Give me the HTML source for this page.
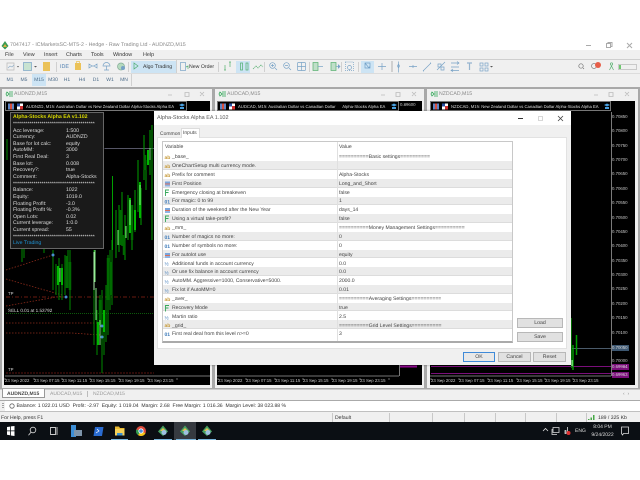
<!DOCTYPE html>
<html><head><meta charset="utf-8">
<style>
html,body{margin:0;padding:0;background:#fff}
#p{position:relative;width:640px;height:480px;overflow:hidden;background:#fff;font-family:"Liberation Sans",sans-serif;font-size:5px;color:#333;text-rendering:geometricPrecision;filter:blur(.3px)}
#p div,#p span{position:absolute;white-space:nowrap}
.t{line-height:8px;height:8px}
.win{background:#f0f0f0;border:1px solid #a8a8a8;box-sizing:border-box}
.blk{background:#000}
.wh{color:#ddd}
.tf{top:75px;height:11px;line-height:11px;text-align:center;color:#4a6a88;font-size:5px}
.ro{left:163px;width:349px;height:8.83px;box-sizing:border-box;border-bottom:1px solid #dcdcdc}
.lb{left:172px;line-height:8px;color:#444;font-size:5.100px}
.vl{left:339px;line-height:8px;color:#444;font-size:5.100px}
.btn{background:#e1e1e1;border:1px solid #b8b8b8;box-sizing:border-box;text-align:center;color:#444;font-size:5.200px;line-height:8.500px}
.ov{left:13px;color:#d8d8d8;font-size:5.200px;line-height:7px}
.ov2{left:66px;color:#d8d8d8;font-size:5.200px;line-height:7px}
.ax{color:#ccc;font-size:4.300px;line-height:6px}
</style></head><body><div id="p">

<!-- title -->
<div style="left:0;top:40px;width:640px;height:10px;background:#fff"></div>
<svg style="position:absolute;left:1px;top:41px" width="8" height="9"><path d="M4 0L7.500 5 4 8.500.5 5z" fill="#3a9a55"/><path d="M2 6l2-3 2 3z" fill="#e0b040"/></svg>
<div class="t" style="left:10px;top:41px;color:#8a8a8a;font-size:5.300px">7047417 - ICMarketsSC-MT5-2 - Hedge - Raw Trading Ltd - AUDNZD,M15</div>
<svg style="position:absolute;left:582px;top:41px" width="58" height="9" stroke="#aaa" fill="none"><path d="M4 4.500h5"/><path d="M24.500 2.500h4v4h-4z"/><path d="M26 2.500v-1h4v4h-1"/><path d="M45 2l5 5M50 2l-5 5"/></svg>

<!-- menu -->
<div style="left:0;top:50px;width:640px;height:10px;background:#f0f0f0"></div>
<div class="t" style="left:5px;top:51px;color:#333;font-size:5.400px">File</div>
<div class="t" style="left:23px;top:51px;color:#333;font-size:5.400px">View</div>
<div class="t" style="left:44px;top:51px;color:#333;font-size:5.400px">Insert</div>
<div class="t" style="left:66px;top:51px;color:#333;font-size:5.400px">Charts</div>
<div class="t" style="left:91px;top:51px;color:#333;font-size:5.400px">Tools</div>
<div class="t" style="left:113px;top:51px;color:#333;font-size:5.400px">Window</div>
<div class="t" style="left:143px;top:51px;color:#333;font-size:5.400px">Help</div>

<!-- toolbars -->
<div style="left:0;top:60px;width:640px;height:27px;background:#f0f0f0"></div>
<div style="left:0;top:59px;width:640px;height:1px;background:#cfcfcf"></div>
<div style="left:176px;top:60px;width:1px;height:14px;background:#d0d0d0"></div>
<div style="left:0;top:73px;width:640px;height:1px;background:#dcdcdc"></div>
<div style="left:131px;top:60.500px;width:45px;height:12px;background:#cde4f4"></div>
<div style="left:236px;top:60.500px;width:14px;height:12px;background:#cde4f4"></div>
<div style="left:361px;top:60.500px;width:13px;height:12px;background:#cde4f4"></div>
<div class="t" style="left:143px;top:63px;color:#333;font-size:5.200px">Algo Trading</div>
<div class="t" style="left:189px;top:63px;color:#333;font-size:5.200px">New Order</div>
<div class="t" style="left:60px;top:63px;color:#4f7fb0;font-size:5.400px">IDE</div>
<svg style="position:absolute;left:0;top:60px;opacity:.8" width="640" height="13" fill="none" stroke="#5a8fbc" stroke-width=".7">
<path d="M7 3h7v7H7z" stroke="#aaa"/><path d="M8 8l2-2 2 1 2-2" stroke="#7aa0c0"/><path d="M17 6h2l-1 1.500z" fill="#333" stroke="none"/>
<rect x="23.500" y="2.500" width="8" height="8" fill="#bfe0ca" stroke="#5a8fbc"/><path d="M34 6h3l-1.500 1.500z" fill="#333" stroke="none"/>
<rect x="43" y="2" width="7" height="9" fill="#eab733" stroke="none"/><rect x="75" y="3" width="6" height="7" fill="#eab733" stroke="none"/><path d="M76.500 3V1.500h3V3" stroke="#eab733"/>
<path d="M89 4l3 2-3 2zM97 4l-3 2 3 2z"/><path d="M92 6h2"/>
<path d="M103 6a3.500 3.500 0 017 0zM106.500 6v4M104 10h5"/>
<circle cx="121" cy="6.500" r="3.500" fill="#a7d5b2" stroke="#6a9a80"/><circle cx="123" cy="8" r="2" fill="#5a8fbc" stroke="none"/>
<path d="M134 3l4 3-4 3z" stroke="#2f9f4f"/>
<rect x="180.500" y="2.500" width="5" height="8" stroke="#5a8fbc"/><path d="M186 7l2-1v3" stroke="#2f9f4f"/>
<path d="M225 10V5M224 10h2M230 7V2M229 2h2" stroke="#2fa04f"/>
<path d="M240.500 3h2v7h-2zM246 3h2v7h-2z" stroke="#2f9f4f"/>
<path d="M253 9l3-3 2 2 3-3 2 2" stroke="#2f9f4f" stroke-dasharray="1.500 .5"/>
<circle cx="272.500" cy="5.500" r="2.800"/><path d="M275 8l2 2M271 5.500h3M272.500 4v3"/>
<circle cx="286.500" cy="5.500" r="2.800"/><path d="M289 8l2 2M285 5.500h3"/>
<rect x="297.500" y="2.500" width="8" height="8" rx="1"/><path d="M301.500 2.500v8M297.500 6.500h8"/>
<rect x="313" y="2.500" width="5" height="8" fill="#b5dcc0" stroke="#2f9f4f"/><path d="M318 6.500h5"/>
<rect x="331" y="2.500" width="5" height="8" fill="#b5dcc0" stroke="#2f9f4f"/><path d="M336 6.500h2"/><path d="M338 4.500l2 2-2 2" fill="#5a8fbc"/>
<rect x="345.500" y="2" width="8" height="8.500" stroke-dasharray="1 1"/><circle cx="349.500" cy="7.500" r="2"/>
<path d="M365 3v5h5v-5zM365 3l4 5 1-2"/>
<path d="M378 6.500h8M382 3v7"/>
<path d="M398.500 1.500v11M398.500 4l1 2-1 2-1-2z"/>
<path d="M409 6.500h8M413 5v3"/>
<path d="M423 11l8-8M423 11h1M430 3h1"/>
<path d="M437 10l8-8M438 4h3v3h-3zM441 7h3v3h-3z"/>
<path d="M451 3h8M451 7h8M451 10.500h8M457 1.500l2 1.500-2 1.500M453 9l-2 1.500 2 1"/>
<path d="M467 3h5M469.500 3v7" stroke="#7fa6c7" stroke-width="1.200"/>
<rect x="480" y="3" width="3" height="3"/><rect x="485" y="3" width="3" height="3"/><rect x="480" y="8" width="3" height="3"/><rect x="485" y="8" width="3" height="3"/><path d="M490 6h3l-1.500 1.500z" fill="#333" stroke="none"/>
<circle cx="581" cy="6" r="2.200" stroke="#555"/><path d="M583 8l1 1" stroke="#555"/>
<circle cx="594" cy="6" r="2.500" stroke="#666"/><circle cx="598" cy="5" r="3" fill="#e53a20" stroke="none"/>
<circle cx="611.500" cy="4" r="1.200" stroke="#2f9f4f"/><path d="M609.500 10l2-4 2 4" stroke="#2f9f4f"/>
<rect x="618.500" y="4.500" width="18" height="5" stroke="#aaa"/><rect x="619" y="5" width="2" height="4" fill="#4fc04f" stroke="none"/>
</svg>
<div style="left:56px;top:62px;width:1px;height:10px;background:#d0d0d0"></div>
<div style="left:128px;top:62px;width:1px;height:10px;background:#d0d0d0"></div>
<div style="left:218px;top:62px;width:1px;height:10px;background:#d0d0d0"></div>
<div style="left:264px;top:62px;width:1px;height:10px;background:#d0d0d0"></div>
<div style="left:309px;top:62px;width:1px;height:10px;background:#d0d0d0"></div>
<div style="left:341px;top:62px;width:1px;height:10px;background:#d0d0d0"></div>
<div style="left:358px;top:62px;width:1px;height:10px;background:#d0d0d0"></div>
<div style="left:391px;top:61px;width:2px;height:11px;background:#d0d0d0"></div>

<!-- timeframes -->
<div style="left:32px;top:74px;width:14px;height:12px;background:#cde4f4"></div>
<div style="left:131px;top:74px;width:1px;height:12px;background:#d0d0d0"></div>
<div class="tf" style="left:3px;width:14px">M1</div>
<div class="tf" style="left:17px;width:14px">M5</div>
<div class="tf" style="left:32px;width:14px">M15</div>
<div class="tf" style="left:46px;width:14px">M30</div>
<div class="tf" style="left:60px;width:14px">H1</div>
<div class="tf" style="left:75px;width:14px">H4</div>
<div class="tf" style="left:89px;width:14px">D1</div>
<div class="tf" style="left:103px;width:14px">W1</div>
<div class="tf" style="left:117px;width:14px">MN</div>

<!-- MDI -->
<div style="left:0;top:87px;width:640px;height:303px;background:#a9a9a9"></div>

<!-- windows -->
<div class="win" style="left:1px;top:87.500px;width:212px;height:301px"></div>
<div class="blk" style="left:4px;top:101px;width:206px;height:284px"></div>
<div class="t" style="left:14px;top:90px;color:#8a8a8a;font-size:5.200px">AUDNZD,M15</div>
<div class="win" style="left:214px;top:87.500px;width:211px;height:301px"></div>
<div class="blk" style="left:217px;top:101px;width:205px;height:284px"></div>
<div class="t" style="left:227px;top:90px;color:#8a8a8a;font-size:5.200px">AUDCAD,M15</div>
<div class="win" style="left:426px;top:87.500px;width:213px;height:301px"></div>
<div class="blk" style="left:430px;top:101px;width:205px;height:284px"></div>
<div class="t" style="left:439px;top:90px;color:#8a8a8a;font-size:5.200px">NZDCAD,M15</div>
<svg style="position:absolute;left:0;top:88px" width="640" height="13" fill="none" stroke-width=".8">
<path d="M7 4l2 2-2 2-1-2zM10 3v6M12 3v6" stroke="#35a85a"/><path d="M220 4l2 2-2 2-1-2zM223 3v6M225 3v6" stroke="#35a85a"/><path d="M432 4l2 2-2 2-1-2zM435 3v6M437 3v6" stroke="#35a85a"/>
<path d="M168 7h4M185 4.500h4v4h-4zM200 4l4 4M204 4l-4 4" stroke="#bbb"/>
<path d="M381 7h4M396 4.500h4v4h-4zM412 4l4 4M416 4l-4 4" stroke="#bbb"/>
<path d="M594 7h4M609 4.500h4v4h-4zM625 4l4 4M629 4l-4 4" stroke="#bbb"/>
</svg>

<!-- chart 1 -->
<svg style="position:absolute;left:5px;top:101px" width="205" height="284">
<g transform="translate(-5,-101)" fill="none">
<path d="M104.500 148.500H154" stroke="#556"/>
<path d="M6 270L53 255" stroke="#8a2a1a" stroke-width=".8" stroke-dasharray="1.500 1.500"/>
<path d="M6 279L62 295" stroke="#8a2a1a" stroke-width=".8" stroke-dasharray="1.500 1.500"/>
<path d="M6 306L62 296" stroke="#8a2a1a" stroke-width=".8" stroke-dasharray="1.500 1.500"/>
<path d="M6 297H154" stroke="#6a1a10" stroke-width=".9" stroke-dasharray="4 2 1 2"/>
<path d="M6 313.500H154" stroke="#0c5a0c" stroke-width="1" stroke-dasharray="1 1"/>
<path d="M6 323H98" stroke="#8a2a1a" stroke-width=".8" stroke-dasharray="1.500 1.500"/>
<path d="M6 333L72 333L100 335" stroke="#8a2a1a" stroke-width=".8" stroke-dasharray="1.500 1.500"/>
<path d="M6 373H154" stroke="#5a1510" stroke-width=".9" stroke-dasharray="2 1"/>
<g stroke="#008a00">
<path d="M7 139V160M22 249V262M24 249V258M44 249V253M70 250V262"/>
<path d="M53 250V290M56 264V295M59 258V300M62 264V300M65 255V295M68 250V288M70 255V310"/>
<path d="M94 250V345M97 310V355M100 295V340M102 290V373M104 330V355M106 285V342M108 255V335M110 250V310M112 240V305"/>
<path d="M112.500 176V250M116 210V258M119 205V252M122 192V246M125 215V260M128 195V240M132 212V250M135 190V232M138 160V212M141 188V225M144 135V180M146 160V190M150 130V175M152 125V240" stroke="#00a000"/>
</g>
<g stroke="#006a00" stroke-width="2.500">
<path d="M67 256V288M70 262V290M108 258V300M111 262V295M100 300V325M120 210V245M124 235V255M132 205V240M145 155V170"/>
</g>
<g stroke="#00b800" stroke-width="2">
<path d="M58 266V285M62 268V285M98 322V345M104 310V332M130 198V233M135 210V230M140 182V218M148 150V165"/>
</g>
<g stroke="#7fe87f" stroke-width="1">
<path d="M95 250V282M96 288V320M100 320V345M60 268V282M118 230V245M130 200V225M126 226V238M140 185V205M150 148V160"/>
</g>
<path d="M94 252V290" stroke="#aff0af"/>
<g fill="#4a8fd0"><circle cx="53" cy="255" r="1.500"/><circle cx="66" cy="297" r="1.500"/><circle cx="102" cy="326" r="1.500"/><circle cx="102" cy="337" r="1.500"/></g>
</g>
</svg>
<div class="ax" style="left:8px;top:291px">TP</div>
<div class="ax" style="left:8px;top:308px;color:#ddd;font-size:4.600px">SELL 0.01 at 1.53792</div>
<div class="ax" style="left:8px;top:367px">TP</div>

<!-- chart 3 / 2 lines -->
<svg style="position:absolute;left:0;top:0" width="640" height="400" fill="none">
<path d="M5 376H210M217 376H399M430 376H611" stroke="#999" stroke-width=".8"/>
<path d="M399.500 112V376M611.500 112V376" stroke="#999" stroke-width=".8"/>
<path d="M431 366.500H611M431 373.500H611" stroke="#7a0e7a" stroke-width=".9"/>
<path d="M572 348.500H611" stroke="#4a5a6a"/>
<path d="M400 366.500h17" stroke="#900a90" stroke-width="2"/>
<path d="M571.500 318V368" stroke="#007a00"/><path d="M573 345V370" stroke="#00c000" stroke-width="1.200"/><path d="M576.500 335V355" stroke="#00a000" stroke-width="1.500"/><path d="M572 360v6" stroke="#cfc"/>
<path d="M5 378v2M34 378v2M62 378v2M90 378v2M119 378v2M148 378v2M177 378v2M218 378v2M246 378v2M275 378v2M303 378v2M332 378v2M360 378v2M389 378v2M431 378v2M459 378v2M488 378v2M517 378v2M545 378v2M573 378v2" stroke="#aaa" stroke-width=".6"/>
</svg>
<div class="ax" style="left:612px;top:114px">0.70850</div><div class="ax" style="left:612px;top:128.400px">0.70800</div><div class="ax" style="left:612px;top:142.700px">0.70750</div><div class="ax" style="left:612px;top:157px">0.70700</div><div class="ax" style="left:612px;top:171.400px">0.70650</div><div class="ax" style="left:612px;top:185.800px">0.70600</div><div class="ax" style="left:612px;top:200.200px">0.70550</div><div class="ax" style="left:612px;top:214.500px">0.70500</div>
<div class="ax" style="left:612px;top:229px">0.70450</div><div class="ax" style="left:612px;top:243.300px">0.70400</div><div class="ax" style="left:612px;top:257.600px">0.70350</div><div class="ax" style="left:612px;top:272px">0.70300</div><div class="ax" style="left:612px;top:286.400px">0.70250</div><div class="ax" style="left:612px;top:300.800px">0.70200</div><div class="ax" style="left:612px;top:315px">0.70150</div><div class="ax" style="left:612px;top:329.500px">0.70100</div>
<div class="ax" style="left:612px;top:345px;background:#3c5670;width:17px;height:6px;color:#ddd">0.70050</div>
<div class="ax" style="left:612px;top:358px">0.70000</div>
<div class="ax" style="left:612px;top:364px;background:#7a0e7a;width:17px;height:6px;color:#ddd">0.69984</div>
<div class="ax" style="left:612px;top:372px;background:#7a0e7a;width:17px;height:6px;color:#ddd">0.69963</div>
<div class="ax" style="left:400px;top:101.500px">0.89600</div>

<div class="ax" style="left:5px;top:378px">23 Sep 2022</div><div class="ax" style="left:34px;top:378px">23 Sep 07:15</div><div class="ax" style="left:62px;top:378px">23 Sep 11:15</div><div class="ax" style="left:90px;top:378px">23 Sep 15:15</div><div class="ax" style="left:119px;top:378px">23 Sep 19:15</div><div class="ax" style="left:148px;top:378px">23 Sep 23:15</div>
<div class="ax" style="left:218px;top:378px">23 Sep 2022</div><div class="ax" style="left:246px;top:378px">23 Sep 07:15</div><div class="ax" style="left:275px;top:378px">23 Sep 11:15</div><div class="ax" style="left:303px;top:378px">23 Sep 15:15</div><div class="ax" style="left:332px;top:378px">23 Sep 19:15</div><div class="ax" style="left:360px;top:378px">23 Sep 23:15</div>
<div class="ax" style="left:431px;top:378px">23 Sep 2022</div><div class="ax" style="left:459px;top:378px">23 Sep 07:15</div><div class="ax" style="left:488px;top:378px">23 Sep 11:15</div><div class="ax" style="left:517px;top:378px">23 Sep 15:15</div><div class="ax" style="left:545px;top:378px">23 Sep 19:15</div><div class="ax" style="left:573px;top:378px">23 Sep 23:15</div>

<!-- chart header boxes -->
<div style="left:5px;top:101px;width:182px;height:10px;background:#000;border:1px solid #777;box-sizing:border-box"></div>
<div style="left:217px;top:101px;width:182px;height:10px;background:#000;border:1px solid #777;box-sizing:border-box"></div>
<div style="left:430px;top:101px;width:181px;height:10px;background:#000;border:1px solid #777;box-sizing:border-box"></div>
<svg style="position:absolute;left:0;top:101px" width="640" height="11">
<rect x="8" y="2.500" width="6" height="6" fill="#5f86c4"/><rect x="10" y="2.500" width="2" height="6" fill="#d85040"/><rect x="17" y="2.500" width="6" height="6" fill="#fff"/><rect x="17" y="2.500" width="3" height="3" fill="#2a4fa0"/><rect x="20" y="5" width="3" height="3.500" fill="#d03030"/><path d="M179 4l3-1.500L185 4l-3 1.500zM180 6h4v2h-4z" fill="#4aa0e0"/>
<rect x="220" y="2.500" width="6" height="6" fill="#5f86c4"/><rect x="222" y="2.500" width="2" height="6" fill="#d85040"/><rect x="229" y="2.500" width="6" height="6" fill="#fff"/><rect x="229" y="2.500" width="3" height="3" fill="#2a4fa0"/><rect x="232" y="5" width="3" height="3.500" fill="#d03030"/><path d="M391 4l3-1.500L397 4l-3 1.500zM392 6h4v2h-4z" fill="#4aa0e0"/>
<rect x="433" y="2.500" width="6" height="6" fill="#5f86c4"/><rect x="435" y="2.500" width="2" height="6" fill="#d85040"/><rect x="442" y="2.500" width="6" height="6" fill="#fff"/><rect x="442" y="2.500" width="3" height="3" fill="#2a4fa0"/><rect x="445" y="5" width="3" height="3.500" fill="#d03030"/><path d="M604 4l3-1.500L610 4l-3 1.500zM605 6h4v2h-4z" fill="#4aa0e0"/>
</svg>
<div class="t wh" style="left:26px;top:103px;font-size:4.200px">AUDNZD, M15: Australian Dollar vs New Zealand Dollar Alpha-Stocks Alpha EA</div>
<div class="t wh" style="left:238px;top:103px;font-size:4.200px">AUDCAD, M15: Australian Dollar vs Canadian Dollar&nbsp; &nbsp; &nbsp; Alpha-Stocks Alpha EA</div>
<div class="t wh" style="left:451px;top:103px;font-size:4.200px">NZDCAD, M15: New Zealand Dollar vs Canadian Dollar Alpha-Stocks Alpha EA</div>

<!-- overlay panel -->
<div style="left:10px;top:112px;width:94px;height:137px;background:#1a1a1a;border:1px solid #666;box-sizing:border-box"></div>
<div class="ov" style="top:114px;color:#d8d800;font-size:5.200px;font-weight:bold">Alpha-Stocks Alpha EA v1.102</div>
<div class="ov" style="top:121px;letter-spacing:.1px;font-size:5px">****************************************</div>
<div class="ov" style="top:127.500px">Acc leverage:</div><div class="ov2" style="top:127.500px">1:500</div>
<div class="ov" style="top:134px">Currency:</div><div class="ov2" style="top:134px">AUDNZD</div>
<div class="ov" style="top:140.700px">Base for lot calc:</div><div class="ov2" style="top:140.700px">equity</div>
<div class="ov" style="top:147px">AutoMM:</div><div class="ov2" style="top:147px">3000</div>
<div class="ov" style="top:154px">First Real Deal:</div><div class="ov2" style="top:154px">3</div>
<div class="ov" style="top:160.700px">Base lot:</div><div class="ov2" style="top:160.700px">0.008</div>
<div class="ov" style="top:167px">Recovery?:</div><div class="ov2" style="top:167px">true</div>
<div class="ov" style="top:174px">Comment:</div><div class="ov2" style="top:174px">Alpha-Stocks</div>
<div class="ov" style="top:180.500px;letter-spacing:.1px;font-size:5px">****************************************</div>
<div class="ov" style="top:187px">Balance:</div><div class="ov2" style="top:187px">1022</div>
<div class="ov" style="top:193.700px">Equity:</div><div class="ov2" style="top:193.700px">1019.0</div>
<div class="ov" style="top:200.500px">Floating Profit:</div><div class="ov2" style="top:200.500px">-3.0</div>
<div class="ov" style="top:207px">Floating Profit %:</div><div class="ov2" style="top:207px">-0.3%</div>
<div class="ov" style="top:213.700px">Open Lots:</div><div class="ov2" style="top:213.700px">0.02</div>
<div class="ov" style="top:220px">Current leverage:</div><div class="ov2" style="top:220px">1:0.0</div>
<div class="ov" style="top:227px">Current spread:</div><div class="ov2" style="top:227px">55</div>
<div class="ov" style="top:233.500px;letter-spacing:.1px;font-size:5px">****************************************</div>
<div class="ov" style="top:240px;color:#1e90d0">Live Trading</div>

<!-- dialog -->
<div style="left:154px;top:111px;width:417px;height:254px;background:#f0f0f0;box-shadow:0 0 2px rgba(0,0,0,.4)"></div>
<div style="left:154px;top:111px;width:417px;height:14px;background:#fff"></div>
<div class="t" style="left:157px;top:114px;font-size:5.500px;color:#555">Alpha-Stocks Alpha EA 1.102</div>
<svg style="position:absolute;left:510px;top:111px" width="61" height="14" fill="none" stroke-width=".8"><path d="M8 7.500h5" stroke="#333" stroke-width="1"/><path d="M28.500 5.500h4v4h-4z" stroke="#ccc"/><path d="M48 5l5 5M53 5l-5 5" stroke="#444"/></svg>
<div style="left:157px;top:137px;width:410px;height:212px;background:#fff;border:1px solid #e2e2e2;box-sizing:border-box"></div>
<div class="t" style="left:160px;top:129.500px;font-size:5px;color:#444">Common</div>
<div style="left:180.500px;top:128px;width:19px;height:10px;background:#fff;border:1px solid #dcdcdc;border-bottom:0;box-sizing:border-box"></div>
<div class="t" style="left:183px;top:128.500px;font-size:5px;color:#444">Inputs</div>

<!-- list -->
<div style="left:162px;top:141px;width:351px;height:202px;background:#fff;border:1px solid #c8c8c8;border-width:1px 1px 2px 1px;box-sizing:border-box;border-bottom-color:#aaa"></div>
<div class="ro" style="top:161.170px;background:#ebebeb"></div>
<div class="ro" style="top:178.830px;background:#ebebeb"></div>
<div class="ro" style="top:196.500px;background:#ebebeb"></div>
<div class="ro" style="top:214.170px;background:#ebebeb"></div>
<div class="ro" style="top:231.830px;background:#ebebeb"></div>
<div class="ro" style="top:249.500px;background:#ebebeb"></div>
<div class="ro" style="top:267.170px;background:#ebebeb"></div>
<div class="ro" style="top:284.830px;background:#ebebeb"></div>
<div class="ro" style="top:302.500px;background:#ebebeb"></div>
<div class="ro" style="top:320.170px;background:#ebebeb"></div>
<div style="left:337px;top:142px;width:1px;height:199px;background:#e0e0e0"></div>
<div class="lb" style="left:165px;top:143px">Variable</div><div class="vl" style="top:143px">Value</div>

<div class="lb" style="top:153px">_base_</div><div class="vl" style="top:153px">==========Basic settings==========</div>
<div class="lb" style="top:162px">OneChartSetup multi currency mode.</div>
<div class="lb" style="top:171px">Prefix for comment</div><div class="vl" style="top:171px">Alpha-Stocks</div>
<div class="lb" style="top:180px">First Position</div><div class="vl" style="top:180px">Long_and_Short</div>
<div class="lb" style="top:188.500px">Emergency closing at breakeven</div><div class="vl" style="top:188.500px">false</div>
<div class="lb" style="top:197px">For magic: 0 to 99</div><div class="vl" style="top:197px">1</div>
<div class="lb" style="top:206px">Duration of the weekend after the New Year</div><div class="vl" style="top:206px">days_14</div>
<div class="lb" style="top:215px">Using a virtual take-profit?</div><div class="vl" style="top:215px">false</div>
<div class="lb" style="top:224px">_mm_</div><div class="vl" style="top:224px">==========Money Management Settings==========</div>
<div class="lb" style="top:233px">Number of magics no more:</div><div class="vl" style="top:233px">0</div>
<div class="lb" style="top:242px">Number of symbols no more:</div><div class="vl" style="top:242px">0</div>
<div class="lb" style="top:251px">For autolot use</div><div class="vl" style="top:251px">equity</div>
<div class="lb" style="top:259.500px">Additional funds in account currency</div><div class="vl" style="top:259.500px">0.0</div>
<div class="lb" style="top:268px">Or use fix balance in account currency</div><div class="vl" style="top:268px">0.0</div>
<div class="lb" style="top:277px">AutoMM. Aggressive=1000, Conservative=5000.</div><div class="vl" style="top:277px">2000.0</div>
<div class="lb" style="top:286px">Fix lot if AutoMM=0</div><div class="vl" style="top:286px">0.01</div>
<div class="lb" style="top:295px">_aver_</div><div class="vl" style="top:295px">==========Averaging Settings==========</div>
<div class="lb" style="top:304px">Recovery Mode</div><div class="vl" style="top:304px">true</div>
<div class="lb" style="top:313px">Martin ratio</div><div class="vl" style="top:313px">2.5</div>
<div class="lb" style="top:321.500px">_grid_</div><div class="vl" style="top:321.500px">==========Grid Level Settings==========</div>
<div class="lb" style="top:330px">First real deal from this level n&gt;=0</div><div class="vl" style="top:330px">3</div>

<svg style="position:absolute;left:0;top:0" width="172" height="345" font-family="Liberation Sans" font-size="5">
<g fill="#c79a3a" font-weight="bold"><text x="164.500" y="159">ab</text><text x="164.500" y="168">ab</text><text x="164.500" y="177">ab</text><text x="164.500" y="230">ab</text><text x="164.500" y="301">ab</text><text x="164.500" y="327">ab</text></g>
<g fill="#3a78b8" font-weight="bold"><text x="164.500" y="203.500">01</text><text x="164.500" y="239">01</text><text x="164.500" y="248">01</text><text x="164.500" y="336">01</text></g>
<g fill="#3a78b8"><text x="164.500" y="265.500">½</text><text x="164.500" y="274.500">½</text><text x="164.500" y="283.500">½</text><text x="164.500" y="292.500">½</text><text x="164.500" y="319.500">½</text></g>
<g><path d="M165 181.500h5v2h-5zM165 208h5v2h-5zM165 253h5v2h-5z" fill="#7aa6dc"/><path d="M165 183.500h5v1h-5zM165 210h5v1h-5zM165 255h5v1h-5z" fill="#d8705c"/><path d="M165 184.500h5v2h-5zM165 211h5v2h-5zM165 256h5v2h-5z" fill="#8fb4e4"/></g>
<g stroke="#35a85a" fill="none" stroke-width=".9"><path d="M165.500 189.500v6.500M165.500 190h3.500M165.500 192.500h3"/><path d="M165.500 215.500v6.500M165.500 216h3.500M165.500 218.500h3"/><path d="M165.500 305v6.500M165.500 305.500h3.500M165.500 308h3"/></g>
</svg>

<!-- buttons -->
<div class="btn" style="left:517px;top:318px;width:46px;height:10px">Load</div>
<div class="btn" style="left:517px;top:332px;width:46px;height:10px">Save</div>
<div class="btn" style="left:463px;top:352px;width:32px;height:10px;border-color:#3f8ad8;background:#e8e8e8">OK</div>
<div class="btn" style="left:498px;top:352px;width:33px;height:10px">Cancel</div>
<div class="btn" style="left:533px;top:352px;width:33px;height:10px">Reset</div>

<!-- tab bar -->
<div style="left:0;top:389px;width:640px;height:11px;background:#f0f0f0;border-top:1px solid #ccc;box-sizing:border-box"></div>
<div style="left:2px;top:389px;width:43px;height:9px;background:#fff;border:1px solid #999;border-top:0;box-sizing:border-box"></div>
<div class="t" style="left:7px;top:390px;font-size:5px;color:#444;font-weight:bold">AUDNZD,M15</div>
<div class="t" style="left:50px;top:390px;font-size:5px;color:#999">AUDCAD,M15</div>
<div class="t" style="left:93px;top:390px;font-size:5px;color:#999">NZDCAD,M15</div>
<div style="left:87px;top:391px;width:1px;height:6px;background:#bbb"></div>
<div class="t" style="left:623px;top:390px;color:#888;font-size:5px">‹ &nbsp;›</div>

<!-- toolbox -->
<div style="left:0;top:400px;width:640px;height:12px;background:#fff;border-top:1px solid #aaa;border-bottom:1px solid #c0c0c0;box-sizing:border-box"></div>
<div style="left:0;top:401px;width:5px;height:10px;background:#f0f0f0"></div>
<svg style="position:absolute;left:1px;top:402px" width="16" height="9" fill="none"><path d="M2 1v6" stroke="#555" stroke-dasharray="1 1"/><circle cx="11" cy="4" r="2.200" stroke="#666" stroke-width=".8"/></svg>
<div class="t" style="left:16.500px;top:402px;font-size:5.100px;color:#333">Balance: 1 022.01 USD&nbsp; Profit: -2.97&nbsp; Equity: 1 019.04&nbsp; Margin: 2.68&nbsp; Free Margin: 1 016.36&nbsp; Margin Level: 38 023.88 %</div>

<!-- status bar -->
<div style="left:0;top:412px;width:640px;height:10px;background:#f0f0f0"></div>
<div class="t" style="left:1px;top:414px;font-size:5.100px;color:#333">For Help, press F1</div>
<div class="t" style="left:335px;top:414px;font-size:5.100px;color:#333">Default</div>
<div class="t" style="left:598px;top:414px;font-size:5.100px;color:#333">189 / 325 Kb</div>
<div style="left:332px;top:413px;width:1px;height:9px;background:#c8c8c8"></div>
<div style="left:389px;top:413px;width:1px;height:9px;background:#c8c8c8"></div>
<div style="left:432px;top:413px;width:1px;height:9px;background:#c8c8c8"></div>
<div style="left:464px;top:413px;width:1px;height:9px;background:#c8c8c8"></div>
<div style="left:495px;top:413px;width:1px;height:9px;background:#c8c8c8"></div>
<div style="left:525px;top:413px;width:1px;height:9px;background:#c8c8c8"></div>
<div style="left:556px;top:413px;width:1px;height:9px;background:#c8c8c8"></div>
<div style="left:586px;top:413px;width:1px;height:9px;background:#c8c8c8"></div>
<svg style="position:absolute;left:588px;top:414px" width="9" height="7"><path d="M0 6h1.500V5H0zM2.500 6H4V3.500H2.500zM5 6h1.500V1H5z" fill="#45a845"/></svg>

<!-- taskbar -->
<div style="left:0;top:422px;width:640px;height:18px;background:#0b0f14"></div>
<div style="left:174px;top:422px;width:22px;height:18px;background:#363a40"></div>
<svg style="position:absolute;left:0;top:422px" width="640" height="18" fill="none">
<path d="M7 5l3-.4V8.500H7zM10.800 4.400L14.500 4v4.500h-3.700zM7 9.300h3v3.900l-3-.4zM10.800 9.300h3.700V14l-3.700-.5z" fill="#fff"/>
<circle cx="33" cy="8" r="2.800" stroke="#ddd" stroke-width=".8"/><path d="M31 10.300l-2.500 3" stroke="#ddd" stroke-width=".8"/>
<path d="M50.500 5.500h5v7h-5zM57 5v8" stroke="#ccc" stroke-width=".9"/>
<rect x="71" y="3" width="5" height="12" fill="#3c8ed6"/><rect x="74" y="8" width="8" height="6" fill="#7d94aa"/>
<path d="M95 5h8.500l-1.500 9h-8.500z" fill="#2a6bd0"/><path d="M97 7l2 2-3 2" stroke="#fff" stroke-width=".7"/>
<path d="M115 7V4.500h4l1 1.500h4.500v1z" fill="#e8b830"/><rect x="115" y="7" width="9.500" height="6.500" fill="#f5d25a"/><rect x="117" y="11" width="5.500" height="2.500" fill="#3a8fd0"/>
<circle cx="141" cy="9" r="5" fill="#dd4b3e"/><path d="M141 9L145.500 11.300A5 5 0 01138 13z" fill="#f5c518"/><path d="M141 9L138 13A5 5 0 01136.200 7.500z" fill="#2f9d50"/><circle cx="141" cy="9" r="2.200" fill="#4a8fe0" stroke="#fff" stroke-width=".8"/>
<path d="M163 3.500l5 6-5 4.500-5-4.500z" fill="#46a060"/><path d="M160 9l3-3 3 3z" fill="#e6c050"/><circle cx="164" cy="10.500" r="2.500" fill="#9fc0e0"/>
<path d="M185 3.500l5 6-5 4.500-5-4.500z" fill="#46a060"/><path d="M182 9l3-3 3 3z" fill="#e6c050"/><circle cx="186" cy="10.500" r="2.500" fill="#9fc0e0"/>
<path d="M207 3.500l5 6-5 4.500-5-4.500z" fill="#46a060"/><path d="M204 9l3-3 3 3z" fill="#e6c050"/><circle cx="208" cy="10.500" r="2.500" fill="#9fc0e0"/>
<path d="M111 17.500h17M154 17.500h18M176 17.500h20M198 17.500h18" stroke="#7ab6dc"/>
<path d="M543 9l2.500-2.500L548 9" stroke="#ddd" stroke-width=".8"/>
<path d="M553 5.500h6v5h-6zM553 7.500h-1v5h5" stroke="#ddd" stroke-width=".8"/>
<path d="M565 8.500h1v3h-1zM567.500 5v6" stroke="#ddd" stroke-width=".8"/><circle cx="568.500" cy="11" r="2" fill="#e03030"/>
<path d="M621.500 5h7v6.500h-5l-1 1.500-1-1.500z" stroke="#ddd" stroke-width=".8"/>
</svg>
<div class="t" style="left:575px;top:427px;color:#ddd;font-size:5px">ENG</div>
<div class="t" style="left:592px;width:21px;text-align:center;top:423px;color:#ddd;font-size:5px">8:04 PM</div>
<div class="t" style="left:590px;width:25px;text-align:center;top:431px;color:#ddd;font-size:5px">9/24/2022</div>

</div></body></html>
